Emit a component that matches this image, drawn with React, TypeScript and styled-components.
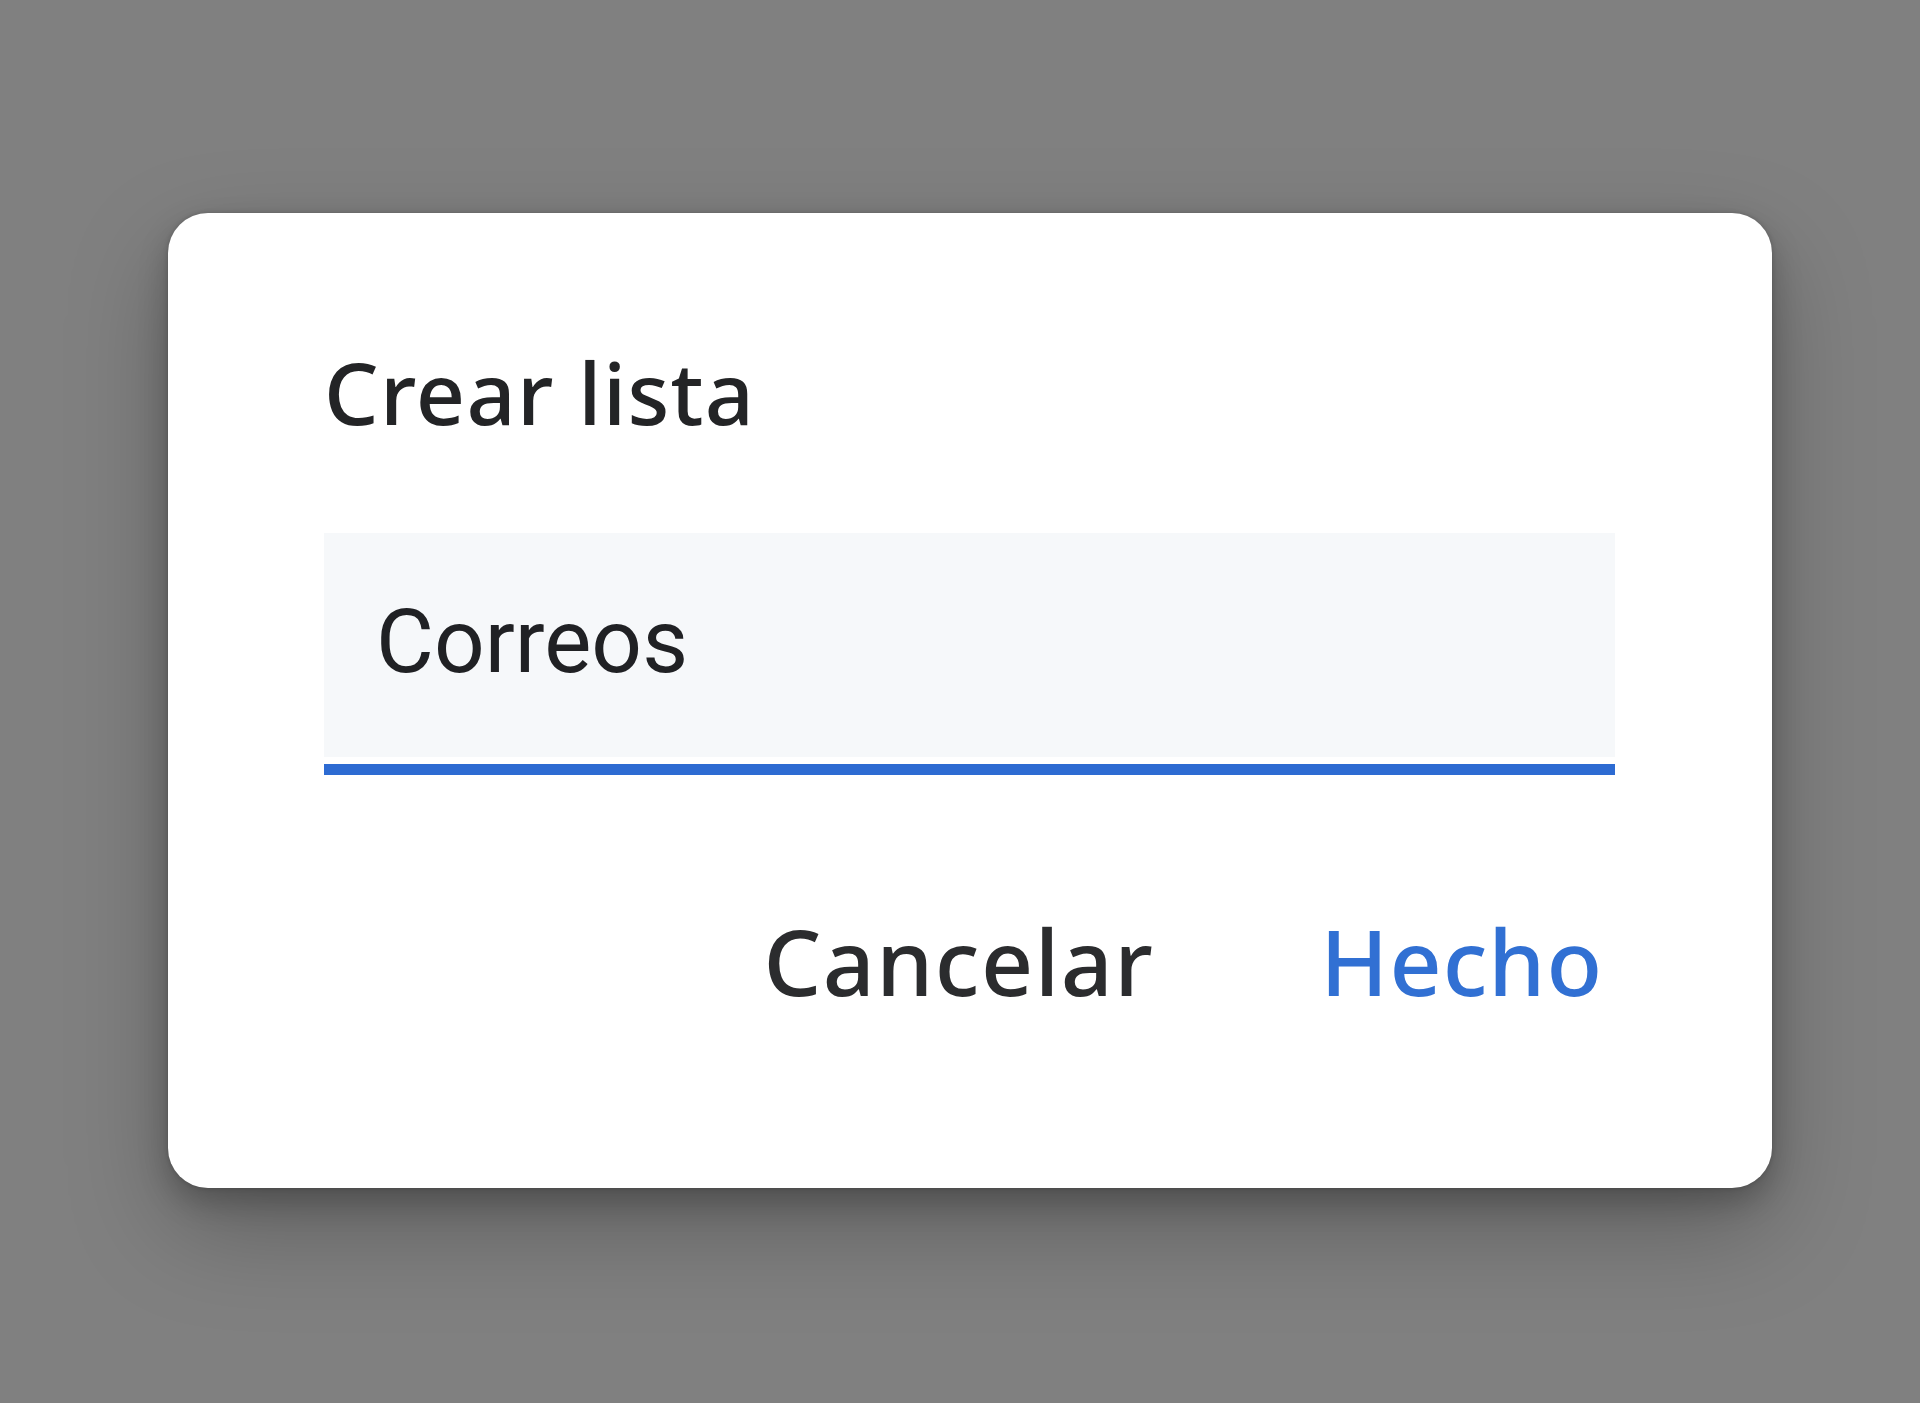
import React from 'react'
import styled, { createGlobalStyle } from 'styled-components'

const GlobalStyle = createGlobalStyle`
  html, body {
    margin: 0;
    padding: 0;
    background: #808080;
  }
  body {
    font-family: 'Noto Sans', 'Open Sans', sans-serif;
  }
`

const Backdrop = styled.div`
  min-height: 1403px;
  box-sizing: border-box;
  padding: 213px 148px 0 168px;
  background: #808080;
`

const Dialog = styled.div`
  width: 1604px;
  box-sizing: border-box;
  padding: 129px 157px 177px 156px;
  background: #ffffff;
  border-radius: 40px;
  box-shadow: 0 40px 100px rgba(0, 0, 0, 0.26), 0 14px 30px rgba(0, 0, 0, 0.22),
    0 0 5px rgba(0, 0, 0, 0.18);
`

const Title = styled.h2`
  margin: 0 0 91px;
  font-family: 'Noto Sans', 'Open Sans', sans-serif;
  font-weight: 500;
  font-size: 86px;
  line-height: 100px;
  letter-spacing: 1.3px;
  color: #232426;
`

const Field = styled.input`
  display: block;
  width: 100%;
  height: 242px;
  box-sizing: border-box;
  margin: 0;
  padding: 0 52px 14px;
  border: none;
  border-bottom: 11px solid #2d6bd2;
  border-radius: 0;
  outline: none;
  background: linear-gradient(#f6f8fa calc(100% - 7px), #ffffff calc(100% - 7px));
  background-clip: padding-box;
  font-family: Roboto, 'Liberation Sans', sans-serif;
  font-size: 89px;
  color: #202124;
`

const Actions = styled.div`
  display: flex;
  justify-content: flex-end;
  gap: 138px;
  margin-top: 136px;
`

const TextButton = styled.button<{ $primary?: boolean }>`
  margin: 0;
  padding: 0 ${(p) => (p.$primary ? '12px' : '14px')} 0 14px;
  border: none;
  background: transparent;
  font-family: 'Noto Sans', 'Open Sans', sans-serif;
  font-weight: 500;
  font-size: 91px;
  line-height: 100px;
  letter-spacing: ${(p) => (p.$primary ? '1px' : '1.5px')};
  color: ${(p) => (p.$primary ? '#3170d3' : '#2b2c2e')};
  cursor: pointer;
`

export default function App() {
  return (
    <>
      <GlobalStyle />
      <Backdrop>
        <Dialog role="dialog" aria-label="Crear lista">
          <Title>Crear lista</Title>
          <Field value="Correos" readOnly />
          <Actions>
            <TextButton>Cancelar</TextButton>
            <TextButton $primary>Hecho</TextButton>
          </Actions>
        </Dialog>
      </Backdrop>
    </>
  )
}
